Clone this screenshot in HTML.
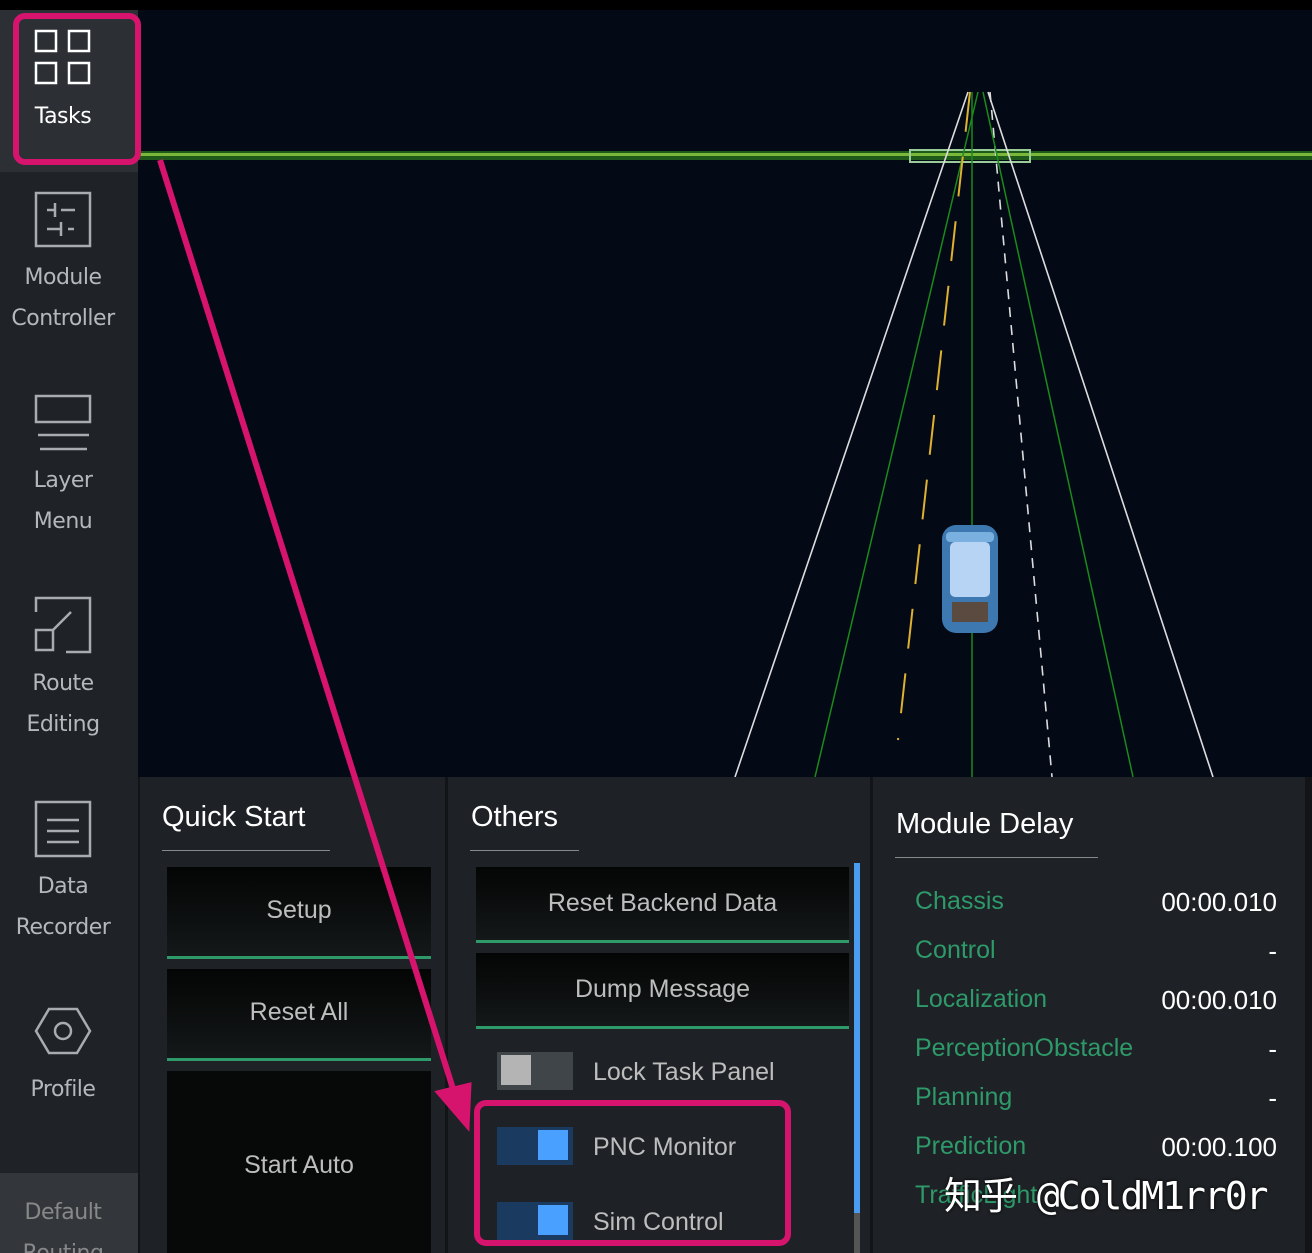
<!DOCTYPE html>
<html><head><meta charset="utf-8"><style>
*{margin:0;padding:0;box-sizing:border-box}
html,body{width:1312px;height:1253px;overflow:hidden}
body{background:#121417;position:relative;font-family:"Liberation Sans",sans-serif}
.abs{position:absolute}
#side{left:0;top:10px;width:138px;height:1243px;background:#1f2226}
.si{position:absolute;left:0;width:126px;text-align:center;color:#b4b8bc;font-family:"DejaVu Sans","Liberation Sans",sans-serif;font-size:22px;line-height:41px;letter-spacing:-0.5px}
.panel{position:absolute;top:777px;height:476px;background:#1e2125}
.ttl{position:absolute;color:#fff;font-size:29px}
.ul{position:absolute;height:1px;background:#888}
.btn{position:absolute;background:linear-gradient(#040505,#141818);color:#bdbdbd;font-size:25px;text-align:center;border-bottom:3px solid #2e9a6a}
.tg{position:absolute;width:76px;height:38px}
.lbl{position:absolute;color:#bdbdbd;font-size:25px}
.row{position:absolute;left:42px;width:362px;font-size:25px}
.row .k{color:#2e9a6a}
.row .v{position:absolute;right:0;top:0;color:#fff;font-size:26px}
</style></head><body>
<div class="abs" style="left:0;top:0;width:1312px;height:10px;background:#000"></div>
<div id="side" class="abs">
 <div class="abs" style="left:0;top:0;width:138px;height:162px;background:#2c3035"></div>
 <div class="abs" style="left:0;top:1163px;width:138px;height:80px;background:#33373b"></div>
</div>
<svg class="abs" style="left:0;top:0" width="138" height="1253" fill="none" stroke-width="2.5">
 <g stroke="#fff"><rect x="36" y="31" width="20" height="20"/><rect x="69" y="31" width="20" height="20"/><rect x="36" y="63" width="20" height="20"/><rect x="69" y="63" width="20" height="20"/></g>
 <g stroke="#a8acb0">
 <rect x="36" y="193" width="54" height="53"/><path d="M47 210h8M55 203v14M61 210h14M47 229h14M61 222v14M68 229h6"/>
 <rect x="36" y="396" width="54" height="26"/><path d="M38 435h51M40 449h47"/>
 <path d="M36 612v-14h54v54h-24M36 650v-20h17v20zM53 630l18-18"/>
 <path d="M36 802h54v54h-54zM45 802v-1M60 802h8M47 820h32M47 831h32M47 842h32"/>
 <path d="M36 1031l13-22h28l13 22-13 22h-28z"/><circle cx="63" cy="1031" r="8"/>
 </g>
</svg>
<div class="si" style="top:96px;color:#fff">Tasks</div>
<div class="si" style="top:257px">Module<br>Controller</div>
<div class="si" style="top:460px">Layer<br>Menu</div>
<div class="si" style="top:663px">Route<br>Editing</div>
<div class="si" style="top:866px">Data<br>Recorder</div>
<div class="si" style="top:1069px">Profile</div>
<div class="si" style="top:1192px;color:#888">Default<br>Routing</div>

<svg class="abs" style="left:138px;top:10px" width="1174" height="767">
 <rect width="1174" height="767" fill="#030a16"/>
 <rect x="0" y="141" width="1174" height="9" fill="#1f5a1a"/>
 <rect x="0" y="143" width="1174" height="3" fill="#7ab83a"/>
 <rect x="772" y="140" width="120" height="12" fill="none" stroke="#9c9" stroke-width="2"/>
 <g stroke="#ddd" stroke-width="1.6" fill="none">
 <path d="M830 82L597 767M850 82L1075 767"/>
 <path d="M852 82L914 767" stroke-dasharray="10 8"/>
 </g>
 <g stroke="#1b8a1b" stroke-width="1.5"><path d="M840 82L677 767M834 82L834 767M845 82L995 767"/></g>
 <path d="M832 82L760 730" stroke="#e0b030" stroke-width="2" stroke-dasharray="40 25"/>
 <g transform="translate(832,570)">
  <rect x="-28" y="-55" width="56" height="108" rx="14" fill="#3d78b0"/>
  <rect x="-20" y="-38" width="40" height="55" rx="5" fill="#b8d4f4"/>
  <rect x="-18" y="22" width="36" height="20" fill="#5a4a40"/>
  <rect x="-24" y="-48" width="48" height="10" rx="4" fill="#7ab0e0"/>
 </g>
</svg>

<div class="panel" style="left:140px;width:305px">
 <div class="ttl" style="left:22px;top:24px">Quick Start</div>
 <div class="ul" style="left:22px;top:73px;width:168px"></div>
 <div class="btn" style="left:27px;top:90px;width:264px;height:92px;line-height:86px">Setup</div>
 <div class="btn" style="left:27px;top:192px;width:264px;height:92px;line-height:86px">Reset All</div>
 <div class="btn" style="left:27px;top:294px;width:264px;height:190px;line-height:188px;border:none;background:#070909">Start Auto</div>
</div>
<div class="panel" style="left:448px;width:422px">
 <div class="ttl" style="left:23px;top:24px">Others</div>
 <div class="ul" style="left:22px;top:73px;width:109px"></div>
 <div class="btn" style="left:28px;top:90px;width:373px;height:76px;line-height:72px">Reset Backend Data</div>
 <div class="btn" style="left:28px;top:176px;width:373px;height:76px;line-height:72px">Dump Message</div>
 <div class="tg" style="left:49px;top:275px;background:#40454a"><div class="abs" style="left:4px;top:3px;width:30px;height:30px;background:#b4b4b4"></div></div>
 <div class="lbl" style="left:145px;top:281px">Lock Task Panel</div>
 <div class="tg" style="left:49px;top:350px;background:#1a3a60"><div class="abs" style="left:41px;top:3px;width:30px;height:30px;background:#4aa0ff"></div></div>
 <div class="lbl" style="left:145px;top:356px">PNC Monitor</div>
 <div class="tg" style="left:49px;top:425px;background:#1a3a60"><div class="abs" style="left:41px;top:3px;width:30px;height:30px;background:#4aa0ff"></div></div>
 <div class="lbl" style="left:145px;top:431px">Sim Control</div>
 <div class="abs" style="left:406px;top:86px;width:6px;height:350px;background:#4a9cf0"></div>
 <div class="abs" style="left:406px;top:436px;width:6px;height:40px;background:#555"></div>
</div>
<div class="panel" style="left:873px;width:432px">
 <div class="ttl" style="left:23px;top:31px">Module Delay</div>
 <div class="ul" style="left:22px;top:80px;width:203px"></div>
 <div class="row" style="top:110px"><span class="k">Chassis</span><span class="v">00:00.010</span></div>
 <div class="row" style="top:159px"><span class="k">Control</span><span class="v">-</span></div>
 <div class="row" style="top:208px"><span class="k">Localization</span><span class="v">00:00.010</span></div>
 <div class="row" style="top:257px"><span class="k">PerceptionObstacle</span><span class="v">-</span></div>
 <div class="row" style="top:306px"><span class="k">Planning</span><span class="v">-</span></div>
 <div class="row" style="top:355px"><span class="k">Prediction</span><span class="v">00:00.100</span></div>
 <div class="row" style="top:404px"><span class="k">TrafficLight</span></div>
</div>
<div class="abs" style="left:944px;top:1172px;white-space:nowrap;color:#fff;font-size:38px;line-height:48px;letter-spacing:-2px;font-family:'DejaVu Sans Mono','Noto Sans CJK SC',monospace;text-shadow:0 0 3px #000">知乎 @ColdM1rr0r</div>

<svg class="abs" style="left:0;top:0" width="1312" height="1253" fill="none" stroke="#d6146e" stroke-width="6">
 <rect x="16" y="16" width="122" height="146" rx="9"/>
 <path d="M160 160L455 1095"/>
 <path d="M437 1092L468 1128L470 1084z" fill="#d6146e" stroke-width="3"/>
 <rect x="477" y="1103" width="311" height="140" rx="9"/>
</svg>
</body></html>
